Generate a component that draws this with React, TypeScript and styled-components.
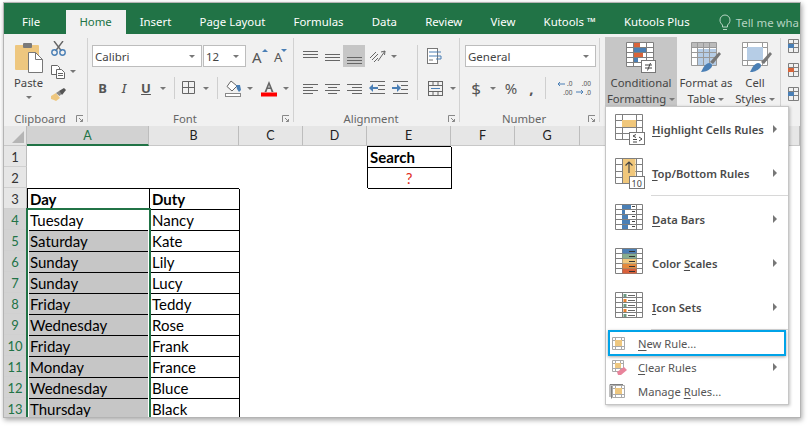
import React from "react";
import styled, { createGlobalStyle } from "styled-components";

const Global = createGlobalStyle`
  html, body { margin: 0; padding: 0; background: #fff; overflow: hidden; }
  * { box-sizing: border-box; }
`;
const UI = `"Noto Sans", "Open Sans", sans-serif`;
const SHEET = `Lato, "Liberation Sans", sans-serif`;

const Page = styled.div`
  width: 808px; height: 427px; padding: 3px 8px 10px 4px;
`;
const Win = styled.div`
  position: relative; width: 796px; height: 414px; overflow: hidden; background: #fff;
  box-shadow: 0 0 0 1px #b4b4b4, 1px 2px 5px 1px rgba(0,0,0,.35);
  display: flex; flex-direction: column;
`;
const TabBar = styled.div`
  height: 31px; background: #217346; display: flex; align-items: flex-end; padding-left: 3.5px;
  font: 11.4px ${UI}; color: #fff; white-space: nowrap; flex: none; overflow: hidden;
`;
const Tab = styled.div<{ $active?: boolean; $file?: boolean }>`
  flex: none; height: 24px; line-height: 24px; padding: 0 14.1px;
  margin: 0 ${p => (p.$file ? "11.3px" : "0")} 0 ${p => (p.$file ? ".4px" : "0")};
  background: ${p => (p.$active ? "#f1f1f1" : "transparent")};
  color: ${p => (p.$active ? "#217346" : "#fff")};
  ${p => (p.$active ? "padding: 0; width: 60px; text-align: center;" : "")}
`;
const Tell = styled.div`
  flex: none; height: 24px; display: flex; align-items: center; gap: 5px; margin-left: 15px; color: #b5d4c2;
`;
const Ribbon = styled.div`
  height: 92px; background: #f1f1f1; display: flex; flex: none; font: 11.3px ${UI}; color: #444;
`;
const Group = styled.div<{ $w: number }>`
  position: relative; width: ${p => p.$w}px; flex: none; display: flex; flex-direction: column;
  &::after { content: ""; position: absolute; right: 0; top: 4px; bottom: 4px; width: 1px; background: #d2d2d2; }
`;
const Body = styled.div<{ $pad?: string }>`
  height: 76px; padding: ${p => p.$pad ?? "0"}; display: flex;
`;
const Stack = styled.div<{ $pt?: number }>`
  display: flex; flex-direction: column; flex: none; padding-top: ${p => p.$pt ?? 0}px;
`;
const LabelRow = styled.div`
  height: 16px; display: flex; align-items: center; padding-right: 4px; color: #666; padding-top: 1px;
`;
const GLabel = styled.div`
  flex: 1; text-align: center; line-height: 16px;
`;
const Launcher = styled.svg`
  width: 8px; height: 8px; flex: none;
`;
const Row = styled.div<{ $h?: number; $mt?: number; $pl?: number }>`
  display: flex; align-items: center; height: ${p => p.$h ?? 22}px; margin-top: ${p => p.$mt ?? 0}px;
  padding-left: ${p => p.$pl ?? 0}px;
`;
const Btn = styled.div<{ $w: number; $on?: boolean; $h?: number }>`
  width: ${p => p.$w}px; height: ${p => p.$h ?? 22}px; flex: none; display: flex; align-items: center; justify-content: center;
  background: ${p => (p.$on ? "#c6c6c6" : "transparent")};
`;
const Caret = styled.span`
  display: inline-block; width: 0; height: 0; border-left: 3px solid transparent; border-right: 3px solid transparent;
  border-top: 3px solid #777; vertical-align: middle;
`;
const VSep = styled.div<{ $mx?: number; $h?: number }>`
  width: 1px; height: ${p => p.$h ?? 22}px; background: #cfcfcf; flex: none; margin: 0 ${p => p.$mx ?? 5}px;
`;
const Combo = styled.div<{ $w: number }>`
  width: ${p => p.$w}px; height: 22px; flex: none; background: #fff; border: 1px solid #bdbdbd;
  display: flex; align-items: center; justify-content: space-between; padding: 0 6px 0 2px;
  font: 11.5px ${UI}; color: #444;
`;
const PasteCol = styled.div`
  width: 43px; flex: none; display: flex; flex-direction: column; align-items: center; padding-top: 8px; line-height: 16px;
  span:first-of-type { margin-top: 2px; }
  span:last-of-type { margin-top: 5px; }
`;
const Big = styled.div<{ $w: number; $on?: boolean; $ml?: number }>`
  width: ${p => p.$w}px; height: 69px; flex: none; margin: 3px 0 0 ${p => p.$ml ?? 0}px; display: flex; flex-direction: column; align-items: center;
  background: ${p => (p.$on ? "#c6c6c6" : "transparent")}; padding-top: 5px; line-height: 15.5px; text-align: center; white-space: nowrap;
  svg { margin-bottom: 2px; flex: none; }
`;
const Grow = styled.div<{ $down?: boolean }>`
  position: relative; width: 20px; height: 22px; flex: none; text-align: left; padding-left: ${p => (p.$down ? 3 : 1)}px;
  font: ${p => (p.$down ? 13 : 15)}px/24px ${UI}; color: #555;
  &::after {
    content: ""; position: absolute; left: ${p => (p.$down ? 10 : 11)}px; top: 4px; border-left: 3px solid transparent; border-right: 3px solid transparent;
    ${p => (p.$down ? `border-top: 3px solid #4a7fb5;` : `border-bottom: 3px solid #4a7fb5;`)}
  }
`;
const Dec = styled.div`
  position: relative; width: 18px; height: 18px; flex: none; font: 6.5px/9px ${UI}; color: #555;
  display: flex; flex-direction: column; justify-content: center; align-items: flex-end; padding-right: 2px;
`;
const DecArrow = styled.svg`
  position: absolute; left: 0; top: 0;
`;

const Sheet = styled.div`
  position: relative; flex: 1; display: grid; overflow: hidden;
  grid-template-columns: 23px 122px 90px 64px 64px 84px 64px 65px 1fr;
  grid-auto-rows: 21px; grid-template-rows: 20px;
  font: 15px ${SHEET}; color: #000;
`;
const ColHead = styled.div<{ $sel?: boolean }>`
  background: ${p => (p.$sel ? "#d2d2d2" : "#e6e6e6")}; color: ${p => (p.$sel ? "#217346" : "#222")};
  border-right: 1px solid #bdbdbd; border-bottom: ${p => (p.$sel ? "2px solid #217346" : "1px solid #c8c8c8")};
  font: 12.5px ${SHEET}; text-align: center; line-height: 19px;
`;
const Corner = styled.div`
  background: #e6e6e6; border-right: 1px solid #bdbdbd; border-bottom: 1px solid #c8c8c8; position: relative;
  &::after { content: ""; position: absolute; right: 2px; bottom: 2px; border-left: 12px solid transparent; border-bottom: 12px solid #b5b5b5; }
`;
const RowHead = styled.div<{ $sel?: boolean }>`
  background: ${p => (p.$sel ? "#d2d2d2" : "#e6e6e6")}; color: ${p => (p.$sel ? "#217346" : "#333")};
  border-bottom: 1px solid #d0d0d0; font: 13px ${SHEET}; text-align: center; line-height: 22px; border-right: 1px solid #bdbdbd;
`;
const Cell = styled.div<{ $box?: boolean; $bold?: boolean; $gray?: boolean; $q?: boolean }>`
  background: ${p => (p.$gray ? "#c6c6c6" : "transparent")};
  box-shadow: ${p => (p.$box ? "1px 1px 0 #000, inset 1px 1px 0 #000" : "none")};
  font-weight: ${p => (p.$bold ? 700 : 400)}; padding-left: 3px; line-height: 23px; white-space: nowrap;
  ${p => (p.$q ? "text-align:center;color:#e0301e;padding-left:0;" : "")}
`;
const Selection = styled.div`
  position: absolute; left: 22px; top: 82px; width: 125px; height: 300px;
  border: 2px solid #217346; box-shadow: inset 1px 1px 0 #fff, inset -1px 0 0 #fff; pointer-events: none;
`;

const Menu = styled.div`
  position: absolute; left: 601px; top: 103px; width: 184px; height: 299px; background: #fff;
  border: 1px solid #c6c6c6; box-shadow: 1px 1px 3px rgba(0,0,0,.25);
  font: 11.2px ${UI}; color: #444;
`;
const BigItem = styled.div`
  height: 44px; display: flex; align-items: center; padding-left: 9px; font-weight: 600; color: #4a4a4a;
  svg:first-child { flex: none; margin-right: 6px; }
  u { text-underline-offset: 2px; }
`;
const Arrow = styled.span`
  margin-left: auto; margin-right: 11px; width: 0; height: 0; border-top: 4px solid transparent; border-bottom: 4px solid transparent;
  border-left: 4px solid #777;
`;
const MenuSep = styled.div`
  height: 1px; margin: 0 0 1px 45px; background: #d8d8d8;
`;
const SmallItem = styled.div`
  position: relative; height: 24px; display: flex; align-items: center; padding-left: 6px; color: #555;
  svg:first-child { flex: none; margin-right: 13px; }
  u { text-underline-offset: 2px; }
`;
const Focus = styled.div`
  position: absolute; left: 2px; right: 2px; top: -1px; bottom: -1px; border: 2px solid #00a3e8;
  box-shadow: 0 1px 3px rgba(0,0,0,.35); pointer-events: none;
`;

const G = "#7f7f7f", B = "#4a7fb5", D = "#666";

const Lines = ({ w = 15, ys, xs }: { w?: number; ys: number[]; xs?: [number, number][] }) => (
  <svg width={w} height={16}>
    {ys.map((y, i) => (
      <rect key={i} x={xs ? xs[i][0] : 0} y={y} width={xs ? xs[i][1] : w} height={1} fill={D} />
    ))}
  </svg>
);

const Clipboard = () => (
  <svg width={30} height={31}>
    <rect x="1" y="3" width="24" height="25" rx="1" fill="#eec77f" />
    <rect x="9" y="1" width="9" height="5" rx="1" fill="#7a7a7a" />
    <path d="M14.5 10.5h7l7 7v13h-14z" fill="#fff" stroke="#777" />
    <path d="M21.5 10.5v7h7" fill="none" stroke="#777" />
  </svg>
);
const Scissors = () => (
  <svg width={15} height={15} fill="none">
    <path d="M3 0l7.5 10M12 0L4.500 10" stroke="#666" strokeWidth="1.4" />
    <circle cx="3.500" cy="11.500" r="2.700" stroke={B} strokeWidth="1.400" />
    <circle cx="11.500" cy="11.500" r="2.700" stroke={B} strokeWidth="1.400" />
  </svg>
);
const CopyIc = () => (
  <svg width={15} height={14} fill="#fff" stroke="#666">
    <path d="M.5.5h6l2 2v7h-8z" />
    <path d="M5.500 4.500h5l3 3v6h-8z" />
    <path d="M7 8.500h5M7 10.500h5" />
  </svg>
);
const Painter = () => (
  <svg width={17} height={15}>
    <path d="M1 9l5-3 4 5-4 3-2-1-3-1z" fill="#eec77f" />
    <path d="M6 6l3-2 2.500 3-2 2z" fill="#888" />
    <path d="M9 4l5-3 2 2-4 5z" fill="#555" />
  </svg>
);
const BorderIc = () => (
  <svg width={14} height={14} fill="none" stroke="#666"><path d="M.5.500h12v12h-12zM6.500.500v12M.5 6.500h12" /></svg>
);
const FillIc = () => (
  <svg width={17} height={17}>
    <path d="M6 1l6 5-5 5-5-4.500z" fill="#fff" stroke="#666" />
    <path d="M11 5h4l1 5-2 2-2-3z" fill={B} />
    <rect x=".5" y="13.500" width="15" height="3" fill="#fff" stroke="#888" />
  </svg>
);
const FontColor = () => (
  <svg width={16} height={17}>
    <path d="M8 1L3.500 12h2l1-3h3l1 3h2L8 1zM7.200 7.500L8 5l.8 2.500z" fill="#666" />
    <rect y="12.500" width="16" height="4" fill="#f00" />
  </svg>
);
const StyleLetter = styled.span<{ $i?: boolean; $u?: boolean }>`
  font: ${p => (p.$i ? "italic 500 13px" : "700 13px")} ${UI}; color: #555;
  text-decoration: ${p => (p.$u ? "underline" : "none")};
`;
const Orient = () => (
  <svg width={17} height={16} fill="none" stroke="#666">
    <path d="M1 10l6-6M3 12l6-6M5 14l4-4" />
    <path d="M9 13L16 3M16 3l-4 1M16 3l-.5 4" stroke="#666" />
  </svg>
);
const Wrap = () => (
  <svg width={16} height={16} fill="none">
    <rect x=".5" y=".5" width="10" height="15" fill="#fff" stroke="#777" />
    <path d="M2 4h12M2 8h12M14 8v3H9" stroke={B} />
    <path d="M2 12h4" stroke="#777" />
  </svg>
);
const Merge = () => (
  <svg width={15} height={15} fill="none" stroke="#666">
    <rect x=".5" y=".5" width="14" height="14" />
    <path d="M.5 4.500h14M.5 10.500h14M5 .5v4M10 .5v4M5 10.500v4M10 10.500v4" />
    <path d="M3 7.500h9" stroke={B} />
  </svg>
);
const Indent = ({ inc }: { inc?: boolean }) => (
  <svg width={16} height={14}>
    <path d={inc ? "M0 6h5V3l4 4-4 4V8H0z" : "M9 6H4V3L0 7l4 4V8h5z"} fill={B} />
    <path d="M1 .5h15M9 4.500h7M9 8.500h7M1 12.500h15" stroke={D} />
  </svg>
);
const Decimal = ({ inc }: { inc?: boolean }) => (
  <Dec>
    <DecArrow width={18} height={18} fill="none" stroke={B}>
      <path d={inc ? "M1 13h7M6 11l2 2-2 2" : "M1 5h7M3 3L1 5l2 2"} />
    </DecArrow>
    <span>{inc ? ".00" : ".0"}</span>
    <span>{inc ? ".0" : ".00"}</span>
  </Dec>
);
const Launch = () => (
  <Launcher viewBox="0 0 8 8" fill="none" stroke="#888">
    <path d="M.5 7V.5H7M3 3l3.500 3.500M6.500 4v2.500H4" />
  </Launcher>
);
const Bulb = () => (
  <svg width={12} height={17} fill="none" stroke="#b5d4c2">
    <path d="M3.500 11C2 9.500 1 8.500 1 6a5 5 0 0 1 10 0c0 2.500-1 3.500-2.500 5v2h-5z" />
    <path d="M4 15.500h4" />
  </svg>
);

const GridBase = ({ y = 0, w, h, xs, ys, color = G }: { y?: number; w: number; h: number; xs: number[]; ys: number[]; color?: string }) => {
  let d = `M.5 ${y + 0.5}h${w}v${h}h-${w}z`;
  xs.forEach(x => { d += `M${x + 0.5} ${y}v${h}`; });
  ys.forEach(v => { d += `M0 ${y + v + 0.5}h${w}`; });
  return <path d={d} fill="none" stroke={color} />;
};
const R5 = [5, 10, 15, 20];
const CondFmt = () => (
  <svg width={30} height={31}>
    <rect x=".5" y=".5" width="27" height="24" fill="#fff" />
    <GridBase w={27} h={24} xs={[7, 20]} ys={R5} />
    <rect x="8" y="1" width="6" height="4" fill="#d9643a" />
    <rect x="8" y="6" width="12" height="4" fill={B} />
    <rect x="8" y="11" width="9" height="4" fill="#d9643a" />
    <rect x="8" y="16" width="4" height="4" fill={B} />
    <rect x="15.500" y="18.500" width="14" height="12" fill="#fff" stroke="#777" />
    <path d="M19 23h7M19 26h7M24.500 21l-3 7.500" stroke="#444" fill="none" />
  </svg>
);
const FmtTable = () => (
  <svg width={30} height={31}>
    <rect x=".5" y=".5" width="25" height="23" fill="#fff" />
    <rect x="1" y="1" width="25" height="5" fill="#bbb" />
    <rect x="7" y="7" width="18" height="16" fill="#b6cde6" />
    <GridBase w={25} h={23} xs={[6, 12, 18]} ys={[5, 10, 15]} color="#999" />
    <path d="M19 20l9-10 2 2-8 10z" fill="#777" />
    <path d="M10 30c2-3 3-8 8-9 3 0 4 3 2 5-3 3-7 4-10 4z" fill={B} />
  </svg>
);
const CellSt = () => (
  <svg width={33} height={31} viewBox="-3 0 33 31">
    <rect x=".5" y=".5" width="25" height="23" fill="#fff" />
    <GridBase w={25} h={23} xs={[5, 20]} ys={[5, 18]} color="#999" />
    <rect x="5" y="5" width="16" height="13" fill="#b6cde6" />
    <path d="M19 20l9-10 2 2-8 10z" fill="#777" />
    <path d="M8 30c2-3 3-8 8-9 3 0 4 3 2 5-3 3-7 4-8 4z" fill={B} />
  </svg>
);
const CellsIcon = ({ c }: { c: string }) => (
  <svg width={11} height={14}>
    <GridBase w={10} h={13} xs={[5]} ys={[4, 8]} />
    <rect x="0" y="5" width="6" height="4" fill={c} />
  </svg>
);

const Highlight = () => (
  <svg width={31} height={31}>
    <GridBase w={27} h={25} xs={[7, 21]} ys={[6, 13, 19]} />
    <rect x="7" y="6" width="14" height="7" fill="#f0c77b" />
    <rect x="14.500" y="18.500" width="15" height="12" fill="#fff" stroke="#777" />
    <path d="M21 20.500l-3 1.500 3 1.500M18 25.500h4M18 28h4M24 23l3 2-3 2" stroke="#444" fill="none" />
  </svg>
);
const TopBottom = () => (
  <svg width={31} height={31}>
    <GridBase w={27} h={25} xs={[7, 21]} ys={[6, 13, 19]} />
    <rect x="8" y="1" width="12.500" height="24" fill="#f0c77b" />
    <path d="M14 15V4M10.500 7.500L14 4l3.500 3.500" stroke="#444" fill="none" strokeWidth="1.200" />
    <rect x="14.500" y="18.500" width="15" height="12" fill="#fff" stroke="#777" />
    <text x="16.500" y="28.500" fontFamily="Noto Sans" fontSize="9" fontWeight="400" fill="#444">10</text>
  </svg>
);
const DataBars = () => (
  <svg width={31} height={30}>
    <GridBase w={27} h={25} xs={[7, 21]} ys={R5} />
    {[[1, 9], [6, 3], [11, 6], [16, 8], [21, 6]].map(([y, w]) => (
      <rect key={y} x="7" y={y} width={w} height="4" fill={B} />
    ))}
    {[2, 7, 12, 17, 22].map(y => <path key={y} d={`M17 ${y + .5}h3`} stroke="#444" />)}
  </svg>
);
const ColorScales = () => (
  <svg width={31} height={30}>
    <GridBase w={27} h={25} xs={[7, 21]} ys={R5} />
    {["#4a7fb5", "#86ad8f", "#f0c77b", "#e58a3c", "#d9603a"].map((c, i) => (
      <rect key={c} x="7.500" y={1 + i * 5} width="14" height="4.500" fill={c} />
    ))}
    {[3, 8, 13, 18, 23].map(y => <path key={y} d={`M14 ${y + .5}h6`} stroke="#333" />)}
  </svg>
);
const IconSets = () => (
  <svg width={31} height={30}>
    <GridBase w={27} h={25} xs={[7, 21]} ys={R5} />
    {[["#6c9a83", 2], ["#e8822c", 7], ["#6c9a83", 12], ["#e8822c", 17], ["#6c9a83", 22]].map(([c, y]) => (
      <rect key={String(y)} x="8.500" y={Number(y)} width="3" height="3" fill={String(c)} />
    ))}
    {[3, 8, 13, 18, 23].map(y => <path key={y} d={`M13 ${y + .5}h7`} stroke="#666" />)}
  </svg>
);
const NewRuleIc = () => (
  <svg width={13} height={13}>
    <GridBase w={12} h={12} xs={[3, 9]} ys={[3, 9]} color="#aaa" />
    <rect x="3" y="3" width="7" height="6" fill="#eec77f" />
  </svg>
);
const ClearIc = () => (
  <svg width={13} height={15} style={{ overflow: "visible" }}>
    <GridBase w={11} h={11} xs={[3, 8]} ys={[3, 8]} color="#aaa" />
    <rect x="3" y="3" width="6" height="5" fill="#eec77f" />
    <path d="M5 12l7-5 3 3-6 5H6z" fill="#e8849b" />
  </svg>
);
const ManageIc = () => (
  <svg width={13} height={13} style={{ overflow: "visible" }}>
    <path d="M-.5 13.500v-13M-2 12V-.5h13" fill="none" stroke={G} />
    <GridBase w={12} h={12} xs={[3, 9]} ys={[3, 9]} color="#aaa" />
    <rect x="3" y="3" width="7" height="6" fill="#eec77f" />
  </svg>
);

const TABS = ["Insert", "Page Layout", "Formulas", "Data", "Review", "View", "Kutools ™", "Kutools Plus"];
const COLS = ["A", "B", "C", "D", "E", "F", "G", ""];
const PEOPLE: [string, string][] = [
  ["Tuesday", "Nancy"], ["Saturday", "Kate"], ["Sunday", "Lily"], ["Sunday", "Lucy"], ["Friday", "Teddy"],
  ["Wednesday", "Rose"], ["Friday", "Frank"], ["Monday", "France"], ["Wednesday", "Bluce"], ["Thursday", "Black"],
];

const Blank = ({ n }: { n: number }) => <>{Array.from({ length: n }, (_, i) => <Cell key={i} />)}</>;

export default function App() {
  return (
    <Page>
      <Global />
      <Win>
        <TabBar>
          <Tab $file>File</Tab>
          <Tab $active>Home</Tab>
          {TABS.map(t => <Tab key={t}>{t}</Tab>)}
          <Tell><Bulb /><span>Tell me wha</span></Tell>
        </TabBar>
        <Ribbon>
          <Group $w={84}>
            <Body $pad="0 0 0 3px">
              <PasteCol>
                <Clipboard />
                <span>Paste</span>
                <Caret />
              </PasteCol>
              <Stack $pt={2}>
                <Btn $w={17} $h={24}><Scissors /></Btn>
                <Row $h={23}><Btn $w={17}><CopyIc /></Btn><Caret style={{ marginLeft: 3 }} /></Row>
                <Btn $w={17} $h={23}><Painter /></Btn>
              </Stack>
            </Body>
            <LabelRow><GLabel>Clipboard</GLabel><Launch /></LabelRow>
          </Group>
          <Group $w={206}>
            <Body $pad="11px 0 0 4px">
              <Stack>
                <Row>
                  <Combo $w={110}>Calibri<Caret /></Combo>
                  <Combo $w={43} style={{ marginLeft: 1 }}>12<Caret /></Combo>
                  <Grow style={{ marginLeft: 5 }}>A</Grow>
                  <Grow $down>A</Grow>
                </Row>
                <Row $mt={11} $h={20}>
                  <Btn $w={21} $h={20}><StyleLetter>B</StyleLetter></Btn>
                  <Btn $w={22} $h={20}><StyleLetter $i>I</StyleLetter></Btn>
                  <Btn $w={22} $h={20}><StyleLetter $u>U</StyleLetter></Btn>
                  <Btn $w={12} $h={20}><Caret /></Btn>
                  <VSep $h={22} />
                  <Btn $w={18} $h={20}><BorderIc /></Btn>
                  <Btn $w={16} $h={20}><Caret /></Btn>
                  <VSep $mx={3} $h={22} />
                  <Btn $w={24} $h={20}><FillIc /></Btn>
                  <Btn $w={10} $h={20}><Caret /></Btn>
                  <Btn $w={24} $h={20} style={{ marginLeft: 2 }}><FontColor /></Btn>
                  <Btn $w={10} $h={20}><Caret /></Btn>
                </Row>
              </Stack>
            </Body>
            <LabelRow><GLabel>Font</GLabel><Launch /></LabelRow>
          </Group>
          <Group $w={166}>
            <Body $pad="11px 0 0 5px">
              <Stack>
                <Row>
                  <Btn $w={22}><Lines ys={[3, 6, 9]} /></Btn>
                  <Btn $w={22}><Lines ys={[6, 9, 12]} /></Btn>
                  <Btn $w={22} $on><Lines ys={[9, 12, 15]} /></Btn>
                  <Btn $w={24}><Orient /></Btn>
                  <Btn $w={10}><Caret /></Btn>
                </Row>
                <Row $mt={11} $h={20}>
                  <Btn $w={22} $h={20}><Lines ys={[4, 7, 10, 13]} xs={[[0, 15], [0, 10], [0, 15], [0, 10]]} /></Btn>
                  <Btn $w={22} $h={20}><Lines ys={[4, 7, 10, 13]} xs={[[0, 15], [3, 9], [0, 15], [3, 9]]} /></Btn>
                  <Btn $w={22} $h={20}><Lines ys={[4, 7, 10, 13]} xs={[[0, 15], [5, 10], [0, 15], [5, 10]]} /></Btn>
                  <Btn $w={24} $h={20}><Indent /></Btn>
                  <Btn $w={22} $h={20}><Indent inc /></Btn>
                </Row>
              </Stack>
              <VSep $h={55} $mx={3} style={{ marginLeft: 6 }} />
              <Stack>
                <Btn $w={24} $h={22} style={{ marginLeft: 2 }}><Wrap /></Btn>
                <Row $mt={11} $h={20}>
                  <Btn $w={24} $h={20} style={{ marginLeft: 2 }}><Merge /></Btn>
                  <Btn $w={12} $h={20}><Caret /></Btn>
                </Row>
              </Stack>
            </Body>
            <LabelRow><GLabel>Alignment</GLabel><Launch /></LabelRow>
          </Group>
          <Group $w={140}>
            <Body $pad="11px 0 0 5px">
              <Stack>
                <Combo $w={131}>General<Caret /></Combo>
                <Row $mt={11} $h={20}>
                  <Btn $w={22} $h={20} style={{ fontSize: 17, color: "#555" }}>$</Btn>
                  <Btn $w={12} $h={20}><Caret /></Btn>
                  <Btn $w={24} $h={20} style={{ fontSize: 15, color: "#555" }}>%</Btn>
                  <Btn $w={17} $h={20} style={{ fontSize: 15, color: "#555", fontWeight: 700 }}>,</Btn>
                  <VSep $mx={5} $h={22} />
                  <Btn $w={19} $h={20} style={{ marginLeft: 5 }}><Decimal /></Btn>
                  <Btn $w={18} $h={20}><Decimal inc /></Btn>
                </Row>
              </Stack>
            </Body>
            <LabelRow><GLabel>Number</GLabel><Launch /></LabelRow>
          </Group>
          <Group $w={181}>
            <Body $pad="0 0 0 5px">
              <Big $w={72} $on><CondFmt /><span>Conditional</span><span>Formatting <Caret /></span></Big>
              <Big $w={54} $ml={2}><FmtTable /><span>Format as</span><span>Table <Caret /></span></Big>
              <Big $w={42} $ml={1}><CellSt /><span>Cell</span><span>Styles <Caret /></span></Big>
            </Body>
            <LabelRow />
          </Group>
          <Group $w={30}>
            <Body $pad="5px 0 0 7px">
              <Stack style={{ gap: 10 }}>
                <CellsIcon c={B} />
                <CellsIcon c="#d9643a" />
                <CellsIcon c={B} />
              </Stack>
            </Body>
          </Group>
        </Ribbon>
        <Sheet>
          <Corner />
          {COLS.map((c, i) => <ColHead key={i} $sel={c === "A"}>{c}</ColHead>)}

          <RowHead>1</RowHead><Blank n={4} /><Cell $box $bold>Search</Cell><Blank n={3} />
          <RowHead>2</RowHead><Blank n={4} /><Cell $box $q>?</Cell><Blank n={3} />
          <RowHead>3</RowHead><Cell $box $bold>Day</Cell><Cell $box $bold>Duty</Cell><Blank n={6} />
          {PEOPLE.map(([d, n], i) => (
            <React.Fragment key={i}>
              <RowHead $sel>{i + 4}</RowHead>
              <Cell $box $gray={i > 0}>{d}</Cell>
              <Cell $box>{n}</Cell>
              <Blank n={6} />
            </React.Fragment>
          ))}
          <Selection />
        </Sheet>
        <Menu>
          <BigItem><Highlight /><span><u>H</u>ighlight Cells Rules</span><Arrow /></BigItem>
          <BigItem><TopBottom /><span><u>T</u>op/Bottom Rules</span><Arrow /></BigItem>
          <MenuSep />
          <BigItem><DataBars /><span><u>D</u>ata Bars</span><Arrow /></BigItem>
          <BigItem><ColorScales /><span>Color <u>S</u>cales</span><Arrow /></BigItem>
          <BigItem><IconSets /><span><u>I</u>con Sets</span><Arrow /></BigItem>
          <MenuSep />
          <SmallItem><NewRuleIc /><span><u>N</u>ew Rule...</span><Focus /></SmallItem>
          <SmallItem><ClearIc /><span><u>C</u>lear Rules</span><Arrow /></SmallItem>
          <SmallItem><ManageIc /><span>Manage <u>R</u>ules...</span></SmallItem>
        </Menu>
      </Win>
    </Page>
  );
}
